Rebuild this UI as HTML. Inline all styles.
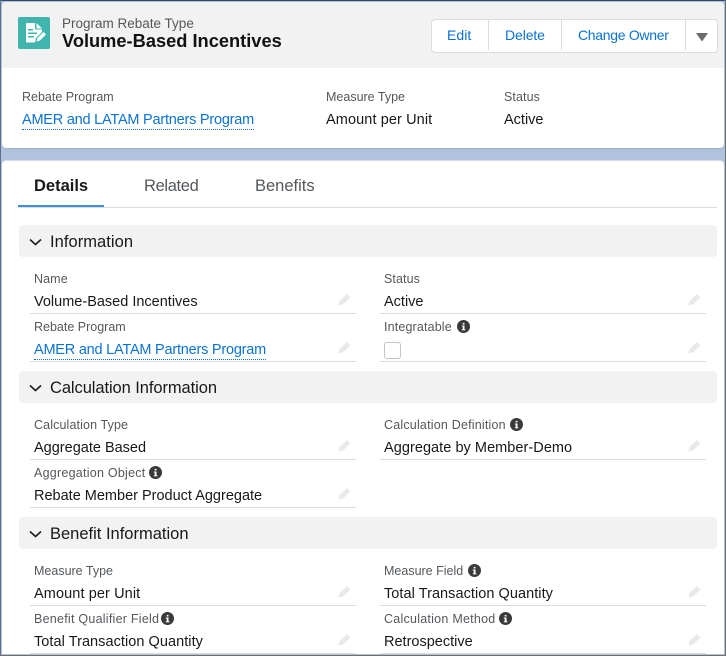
<!DOCTYPE html>
<html><head><meta charset="utf-8"><style>
html,body{margin:0;padding:0;background:#fff}
body{position:relative;width:726px;height:656px;overflow:hidden;font-family:"Liberation Sans",sans-serif}
div,span,svg{position:absolute}
.t{white-space:nowrap;line-height:18px}
.l{font-size:12.5px;color:#54585c;letter-spacing:.25px}
.v{font-size:14.5px;color:#16181a}
.a{color:#0b72d2;border-bottom:1px dotted #0b72d2;line-height:18px;letter-spacing:-.22px}
.ln{height:1px;background:#dcdcdc}
.sec{left:19px;width:698px;height:32px;background:#f2f2f2;border-radius:4px}
.st{font-size:16.5px;color:#16181a;left:50px}
.b{font-size:14px;color:#0b72d2}
</style></head><body>
<svg width="0" height="0" style="position:absolute"><defs>
<g id="pen"><path d="M.5 12.500l1-4.500L9 1l3.500 3.500L5 11.500z" fill="#e9e9e9"/></g>
<g id="chev"><path d="M1 1.500L6.500 6.500 12 1.500" fill="none" stroke="#1c1c1c" stroke-width="1.600"/></g>
<g id="inf"><circle cx="6.500" cy="6.500" r="6.500" fill="#3a3a3a"/><rect x="5.700" y="5.500" width="1.800" height="4.500" fill="#fff"/><rect x="4.800" y="5.500" width="2" height="1" fill="#fff"/><rect x="4.800" y="9.300" width="3.600" height="1" fill="#fff"/><rect x="5.700" y="2.900" width="1.800" height="1.600" fill="#fff"/></g>
</defs></svg>

<!-- page background and frame -->
<div style="left:0;top:0;width:726px;height:656px;background:#b0c3dd"></div>
<div style="left:0;top:0;width:726px;height:1px;background:#34496a"></div>
<div style="left:0;top:0;width:1px;height:656px;background:#5d6f8d"></div>

<!-- header -->
<div style="left:2px;top:2px;width:722px;height:146px;background:#fff;border-radius:4px;box-shadow:0 1px 1px #9fb0c5"></div>
<div style="left:2px;top:2px;width:722px;height:66px;background:#f2f2f2;border-radius:4px 4px 0 0"></div>

<div style="left:18px;top:17px;width:32px;height:32px;background:#3fb5ae;border-radius:2px"></div>
<svg style="left:18px;top:17px" width="32" height="32" viewBox="0 0 32 32">
<path d="M9 6h8v5.500a1 1 0 0 0 1 1h6V15l-6 6-1 4.500H9a1 1 0 0 1-1-1V7a1 1 0 0 1 1-1z" fill="#fff"/>
<path d="M18.500 6l5.500 5.500h-5.500z" fill="#fff"/>
<rect x="10" y="12" width="5" height="1.500" fill="#3fb5ae"/>
<rect x="10" y="15.500" width="9" height="1.500" fill="#3fb5ae"/>
<rect x="10" y="19" width="6" height="1.500" fill="#3fb5ae"/>
<path d="M18.500 24.500l1-3.500 6-6 2.500 2.500-6 6z" fill="#fff"/>
</svg>

<div class="t" style="left:62px;top:15px;font-size:13.5px;color:#54585c">Program Rebate Type</div>
<div class="t" style="left:62px;top:31px;font-size:18.25px;font-weight:700;color:#101214;line-height:20px">Volume-Based Incentives</div>

<div style="left:431px;top:19px;width:285px;height:32px;background:#fff;border:1px solid #dcdcdc;border-radius:4px"></div>
<div style="left:488px;top:20px;width:1px;height:30px;background:#dcdcdc"></div>
<div style="left:561px;top:20px;width:1px;height:30px;background:#dcdcdc"></div>
<div style="left:685px;top:20px;width:1px;height:30px;background:#dcdcdc"></div>
<div class="t b" style="left:447px;top:26px;letter-spacing:.05px">Edit</div>
<div class="t b" style="left:505px;top:26px;letter-spacing:-.1px">Delete</div>
<div class="t b" style="left:578px;top:26px;letter-spacing:-.3px">Change Owner</div>
<svg style="left:696px;top:33px" width="12" height="9"><path d="M0 0h12L6 8.500z" fill="#6b6b6b"/></svg>

<div class="t l" style="left:22px;top:88px;letter-spacing:0">Rebate Program</div>
<div class="t v a" style="left:22px;top:112px;line-height:17px">AMER and LATAM Partners Program</div>
<div class="t l" style="left:326px;top:88px;letter-spacing:0">Measure Type</div>
<div class="t v" style="left:326px;top:111px;letter-spacing:.1px">Amount per Unit</div>
<div class="t l" style="left:504px;top:88px;letter-spacing:.1px">Status</div>
<div class="t v" style="left:504px;top:111px">Active</div>

<!-- body card -->
<div style="left:2px;top:161px;width:722px;height:493px;background:#fff;border-radius:4px 4px 0 0;box-shadow:0 -1px 0 #d5dbe4"></div>
<div class="t" style="left:34px;top:177px;font-size:16.5px;font-weight:700;color:#16181a">Details</div>
<div class="t" style="left:144px;top:177px;font-size:16.5px;color:#54585c;letter-spacing:-.35px">Related</div>
<div class="t" style="left:255px;top:177px;font-size:16.5px;color:#54585c">Benefits</div>
<div style="left:18px;top:207px;width:699px;height:1px;background:#dcdcdc"></div>
<div style="left:18px;top:205px;width:86px;height:2px;background:#3b8fe0"></div>

<!-- Information -->
<div class="sec" style="top:225px"></div>
<svg style="left:29px;top:238px" width="13" height="8"><use href="#chev"/></svg>
<div class="t st" style="top:233px;letter-spacing:.05px">Information</div>

<div class="t l" style="left:34px;top:270px;letter-spacing:.1px">Name</div>
<div class="t v" style="left:34px;top:293px">Volume-Based Incentives</div>
<svg style="left:338px;top:293px" width="13" height="13"><use href="#pen"/></svg>
<div class="ln" style="left:30px;top:313px;width:326px"></div>

<div class="t l" style="left:384px;top:270px;letter-spacing:.1px">Status</div>
<div class="t v" style="left:384px;top:293px">Active</div>
<svg style="left:688px;top:293px" width="13" height="13"><use href="#pen"/></svg>
<div class="ln" style="left:380px;top:313px;width:326px"></div>

<div class="t l" style="left:34px;top:318px;letter-spacing:0">Rebate Program</div>
<div class="t v a" style="left:34px;top:341px">AMER and LATAM Partners Program</div>
<svg style="left:338px;top:341px" width="13" height="13"><use href="#pen"/></svg>
<div class="ln" style="left:30px;top:361px;width:326px"></div>

<div class="t l" style="left:384px;top:318px;letter-spacing:.15px">Integratable</div>
<svg style="left:457px;top:320px" width="13" height="13"><use href="#inf"/></svg>
<div style="left:384px;top:342px;width:15px;height:15px;border:1px solid #c4c4c4;border-radius:3px;background:#fff"></div>
<svg style="left:688px;top:341px" width="13" height="13"><use href="#pen"/></svg>
<div class="ln" style="left:380px;top:361px;width:326px"></div>

<!-- Calculation -->
<div class="sec" style="top:371px"></div>
<svg style="left:29px;top:384px" width="13" height="8"><use href="#chev"/></svg>
<div class="t st" style="top:379px;letter-spacing:-.08px">Calculation Information</div>

<div class="t l" style="left:34px;top:416px;letter-spacing:.12px">Calculation Type</div>
<div class="t v" style="left:34px;top:439px">Aggregate Based</div>
<svg style="left:338px;top:439px" width="13" height="13"><use href="#pen"/></svg>
<div class="ln" style="left:30px;top:459px;width:326px"></div>

<div class="t l" style="left:384px;top:416px;letter-spacing:.2px">Calculation Definition</div>
<svg style="left:510px;top:418px" width="13" height="13"><use href="#inf"/></svg>
<div class="t v" style="left:384px;top:439px;letter-spacing:.05px">Aggregate by Member-Demo</div>
<svg style="left:688px;top:439px" width="13" height="13"><use href="#pen"/></svg>
<div class="ln" style="left:380px;top:459px;width:326px"></div>

<div class="t l" style="left:34px;top:464px">Aggregation Object</div>
<svg style="left:149px;top:466px" width="13" height="13"><use href="#inf"/></svg>
<div class="t v" style="left:34px;top:487px">Rebate Member Product Aggregate</div>
<svg style="left:338px;top:487px" width="13" height="13"><use href="#pen"/></svg>
<div class="ln" style="left:30px;top:507px;width:326px"></div>

<!-- Benefit -->
<div class="sec" style="top:517px"></div>
<svg style="left:29px;top:530px" width="13" height="8"><use href="#chev"/></svg>
<div class="t st" style="top:525px">Benefit Information</div>

<div class="t l" style="left:34px;top:562px;letter-spacing:0">Measure Type</div>
<div class="t v" style="left:34px;top:585px;letter-spacing:.1px">Amount per Unit</div>
<svg style="left:338px;top:585px" width="13" height="13"><use href="#pen"/></svg>
<div class="ln" style="left:30px;top:605px;width:326px"></div>

<div class="t l" style="left:384px;top:562px;letter-spacing:0">Measure Field</div>
<svg style="left:468px;top:564px" width="13" height="13"><use href="#inf"/></svg>
<div class="t v" style="left:384px;top:585px;letter-spacing:.05px">Total Transaction Quantity</div>
<svg style="left:688px;top:585px" width="13" height="13"><use href="#pen"/></svg>
<div class="ln" style="left:380px;top:605px;width:326px"></div>

<div class="t l" style="left:34px;top:610px">Benefit Qualifier Field</div>
<svg style="left:161px;top:612px" width="13" height="13"><use href="#inf"/></svg>
<div class="t v" style="left:34px;top:633px;letter-spacing:.05px">Total Transaction Quantity</div>
<svg style="left:338px;top:633px" width="13" height="13"><use href="#pen"/></svg>
<div class="ln" style="left:30px;top:653px;width:326px"></div>

<div class="t l" style="left:384px;top:610px">Calculation Method</div>
<svg style="left:499px;top:612px" width="13" height="13"><use href="#inf"/></svg>
<div class="t v" style="left:384px;top:633px">Retrospective</div>
<svg style="left:688px;top:633px" width="13" height="13"><use href="#pen"/></svg>
<div class="ln" style="left:380px;top:653px;width:326px"></div>

<!-- outer frame right/bottom -->
<div style="left:725px;top:0;width:1px;height:656px;background:#6e6e6e"></div>
<div style="left:0;top:655px;width:726px;height:1px;background:#6e6e6e"></div>
</body></html>
